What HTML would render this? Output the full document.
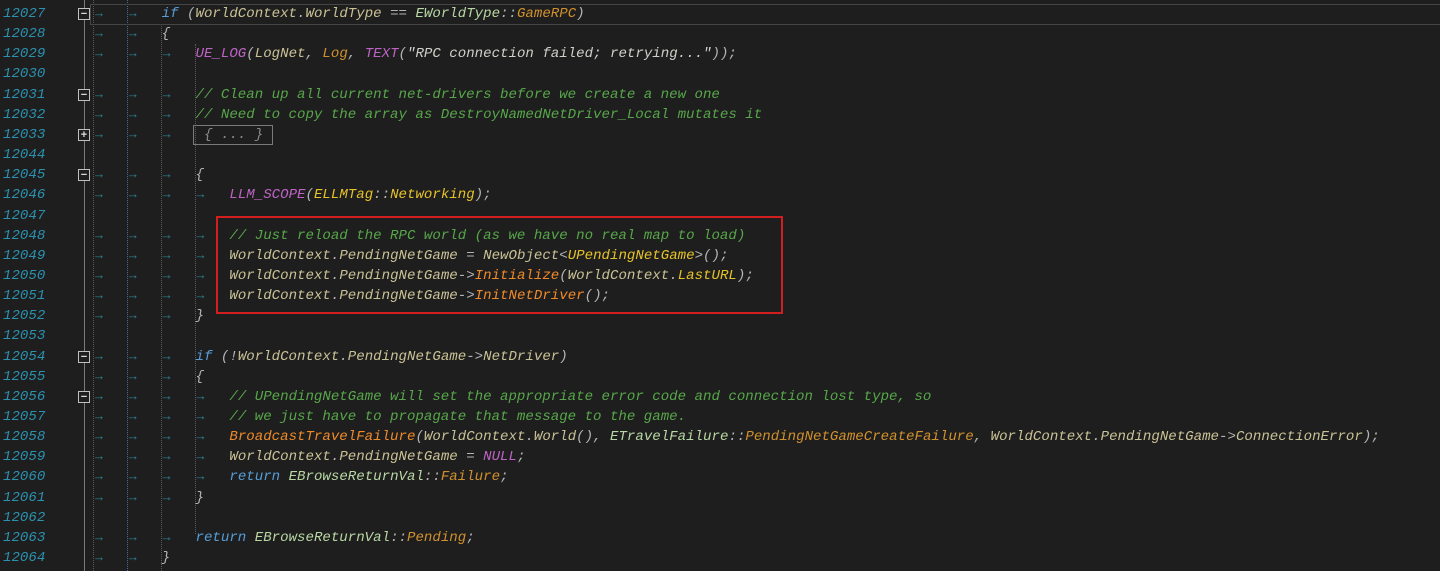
<!DOCTYPE html><html><head><style>
body{margin:0;width:1440px;height:571px;background:#1e1e1e;overflow:hidden;position:relative;font-family:"Liberation Mono",monospace;font-style:italic;font-size:14.1px;}
.r{position:absolute;left:0;height:20px;width:1440px;line-height:20px;white-space:pre}
.n{position:absolute;left:3px;color:#2b91af;}
.c{position:absolute;left:94px;color:#c9c196}
.a{position:absolute;color:#2b8090;font-size:13px;font-style:normal}
.k{color:#569cd6}.m{color:#be63c5}.cm{color:#57a64a}.p{color:#b4b4b4}.t{color:#e6c229}.f{color:#ef8a2a}.e{color:#d0902e}.g{color:#b8d7a3}.s{color:#d0d0c8}
.v{position:absolute;top:0;height:571px;width:0;border-left:1px dotted #5a5a5a}
.fb{position:absolute;left:78px;width:10px;height:10px;border:1px solid #c0c0c0;background:#1e1e1e;color:#ddd;font:bold 11px/10px "Liberation Sans",sans-serif;text-align:center;font-style:normal}
</style></head><body>
<div style="position:absolute;left:84px;top:0;height:571px;border-left:1px solid #7a7a7a"></div>
<div class="v" style="left:93px"></div>
<div class="v" style="left:127px;border-left:1px dotted #4a6a9a"></div>
<div class="v" style="left:161px;top:24px;height:547px"></div>
<div class="v" style="left:195px;top:44px;height:490px"></div>
<div style="position:absolute;left:90px;top:4px;width:1360px;height:19px;border:1px solid #464646"></div>
<div style="position:absolute;left:216px;top:216px;width:563px;height:94px;border:2px solid #d11f1f"></div>
<div style="position:absolute;left:193px;top:125px;width:78px;height:18px;border:1px solid #7a7a7a"></div>
<div id="L"></div>
<script>
const L=[
["12027",2,'<span class="k">if</span><span class="p"> (</span>WorldContext<span class="p">.</span>WorldType <span class="p">==</span> <span class="g">EWorldType</span><span class="p">::</span><span class="e">GameRPC</span><span class="p">)</span>','-'],
["12028",2,'<span class="p">{</span>'],
["12029",3,'<span class="m">UE_LOG</span><span class="p">(</span>LogNet<span class="p">, </span><span class="e">Log</span><span class="p">, </span><span class="m">TEXT</span><span class="p">(</span><span class="s">"RPC connection failed; retrying..."</span><span class="p">));</span>'],
["12030",-1,''],
["12031",3,'<span class="cm">// Clean up all current net-drivers before we create a new one</span>','-'],
["12032",3,'<span class="cm">// Need to copy the array as DestroyNamedNetDriver_Local mutates it</span>'],
["12033",3,'<span style="color:#8a8a8a"> { ... }</span>','+'],
["12044",-1,''],
["12045",3,'<span class="p">{</span>','-'],
["12046",4,'<span class="m">LLM_SCOPE</span><span class="p">(</span><span class="t">ELLMTag</span><span class="p">::</span><span class="t">Networking</span><span class="p">);</span>'],
["12047",-1,''],
["12048",4,'<span class="cm">// Just reload the RPC world (as we have no real map to load)</span>'],
["12049",4,'WorldContext<span class="p">.</span>PendingNetGame <span class="p">=</span> NewObject<span class="p">&lt;</span><span class="t">UPendingNetGame</span><span class="p">&gt;();</span>'],
["12050",4,'WorldContext<span class="p">.</span>PendingNetGame<span class="p">-&gt;</span><span class="f">Initialize</span><span class="p">(</span>WorldContext<span class="p">.</span><span class="t">LastURL</span><span class="p">);</span>'],
["12051",4,'WorldContext<span class="p">.</span>PendingNetGame<span class="p">-&gt;</span><span class="f">InitNetDriver</span><span class="p">();</span>'],
["12052",3,'<span class="p">}</span>'],
["12053",-1,''],
["12054",3,'<span class="k">if</span><span class="p"> (!</span>WorldContext<span class="p">.</span>PendingNetGame<span class="p">-&gt;</span>NetDriver<span class="p">)</span>','-'],
["12055",3,'<span class="p">{</span>'],
["12056",4,'<span class="cm">// UPendingNetGame will set the appropriate error code and connection lost type, so</span>','-'],
["12057",4,'<span class="cm">// we just have to propagate that message to the game.</span>'],
["12058",4,'<span class="f">BroadcastTravelFailure</span><span class="p">(</span>WorldContext<span class="p">.</span>World<span class="p">(), </span><span class="g">ETravelFailure</span><span class="p">::</span><span class="e">PendingNetGameCreateFailure</span><span class="p">, </span>WorldContext<span class="p">.</span>PendingNetGame<span class="p">-&gt;</span>ConnectionError<span class="p">);</span>'],
["12059",4,'WorldContext<span class="p">.</span>PendingNetGame <span class="p">=</span> <span class="m">NULL</span><span class="p">;</span>'],
["12060",4,'<span class="k">return</span> <span class="g">EBrowseReturnVal</span><span class="p">::</span><span class="e">Failure</span><span class="p">;</span>'],
["12061",3,'<span class="p">}</span>'],
["12062",-1,''],
["12063",3,'<span class="k">return</span> <span class="g">EBrowseReturnVal</span><span class="p">::</span><span class="e">Pending</span><span class="p">;</span>'],
["12064",2,'<span class="p">}</span>']
];
let h='';const cw=8.46;
L.forEach((l,i)=>{const top=4+i*20.15;
h+=`<div class="r" style="top:${top}px"><span class="n">${l[0]}</span>`;
if(l[3])h+=`<span class="fb" style="top:4px">${l[3]=='-'?'−':'+'}</span>`;
if(l[1]>0){for(let j=0;j<l[1];j++)h+=`<span class="a" style="left:${95+j*4*cw}px">→</span>`;
h+=`<span class="c" style="left:${94+l[1]*4*cw}px">${l[2]}</span>`;}
h+='</div>';});
document.getElementById('L').innerHTML=h;
</script>
</body></html>
